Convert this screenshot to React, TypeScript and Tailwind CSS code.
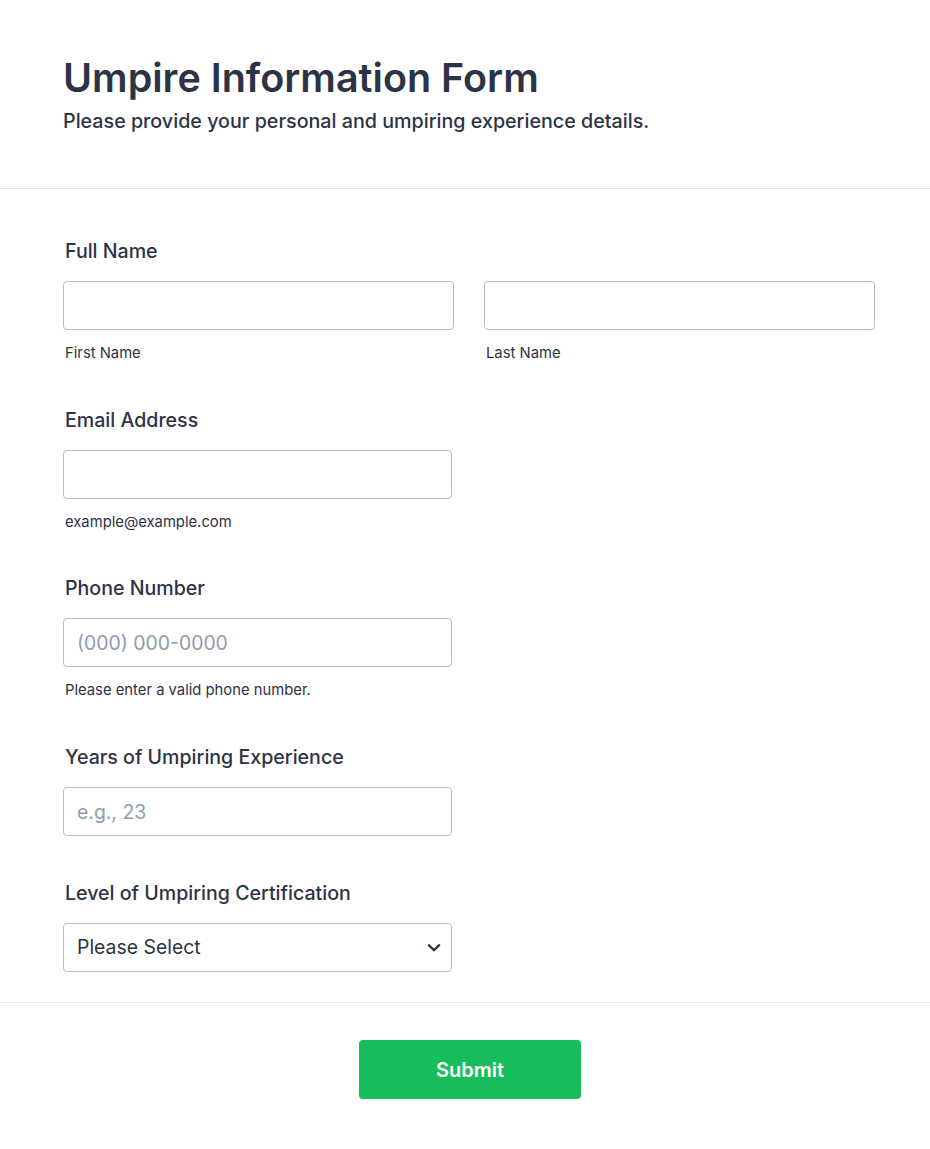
import React from "react";

const font = { fontFamily: "Inter, 'Noto Sans', sans-serif" };

function Label({ children }: { children: React.ReactNode }) {
  return <div className="text-[19.6px] leading-[24px] font-medium text-[#2c3345] pl-[2px]">{children}</div>;
}

function Sub({ children }: { children: React.ReactNode }) {
  return <div className="mt-[13px] text-[14.8px] leading-[20px] text-[#2c3345] pl-[2px]">{children}</div>;
}

function Input({ placeholder, w }: { placeholder?: string; w: string }) {
  return (
    <input
      placeholder={placeholder}
      className={`${w} h-[49px] border border-[#b8bdc9] rounded-[4px] bg-white px-[13px] text-[19.4px] text-[#2c3345] placeholder:text-[#8f9bb0] outline-none`}
      style={font}
    />
  );
}

export default function App() {
  return (
    <div className="w-[930px] bg-white min-h-[1149px]" style={font}>
      <div className="pl-[63px] pt-[54px] pb-[55px] border-b border-[#e3e4ec]">
        <h1 className="text-[39.5px] leading-[48px] font-semibold text-[#2c3345]">Umpire Information Form</h1>
        <p className="mt-[7px] text-[19.7px] leading-[24px] font-medium text-[#2c3345]">
          Please provide your personal and umpiring experience details.
        </p>
      </div>

      <div className="pl-[63px] pt-[50px] pb-[30px] border-b border-[#e8e8f1] flex flex-col">
        <div>
          <Label>Full Name</Label>
          <div className="mt-[18px] flex gap-[30px]">
            <div>
              <Input w="w-[391px]" />
              <Sub>First Name</Sub>
            </div>
            <div>
              <Input w="w-[391px]" />
              <Sub>Last Name</Sub>
            </div>
          </div>
        </div>

        <div className="mt-[45px]">
          <Label>Email Address</Label>
          <div className="mt-[18px]">
            <Input w="w-[389px]" />
            <Sub>example@example.com</Sub>
          </div>
        </div>

        <div className="mt-[44px]">
          <Label>Phone Number</Label>
          <div className="mt-[18px]">
            <Input w="w-[389px]" placeholder="(000) 000-0000" />
            <Sub>Please enter a valid phone number.</Sub>
          </div>
        </div>

        <div className="mt-[45px]">
          <Label>Years of Umpiring Experience</Label>
          <div className="mt-[18px]">
            <Input w="w-[389px]" placeholder="e.g., 23" />
          </div>
        </div>

        <div className="mt-[45px]">
          <Label>Level of Umpiring Certification</Label>
          <div className="mt-[18px] w-[389px] h-[49px] border border-[#b8bdc9] rounded-[4px] bg-white pl-[13px] pr-[10px] flex items-center justify-between">
            <span className="text-[19.4px] text-[#2c3345]">Please Select</span>
            <svg width="14" height="10" viewBox="0 0 14 10">
              <path d="M1.8 2.2 L7 7.2 L12.2 2.2" fill="none" stroke="#2c3345" strokeWidth="2.3" strokeLinecap="round" strokeLinejoin="round" />
            </svg>
          </div>
        </div>
      </div>

      <div className="pl-[63px] w-[877px] pt-[37px] flex justify-center">
        <button className="w-[222px] h-[59px] rounded-[4px] bg-[#18bd5b] text-white text-[20px] font-semibold">
          Submit
        </button>
      </div>
    </div>
  );
}
